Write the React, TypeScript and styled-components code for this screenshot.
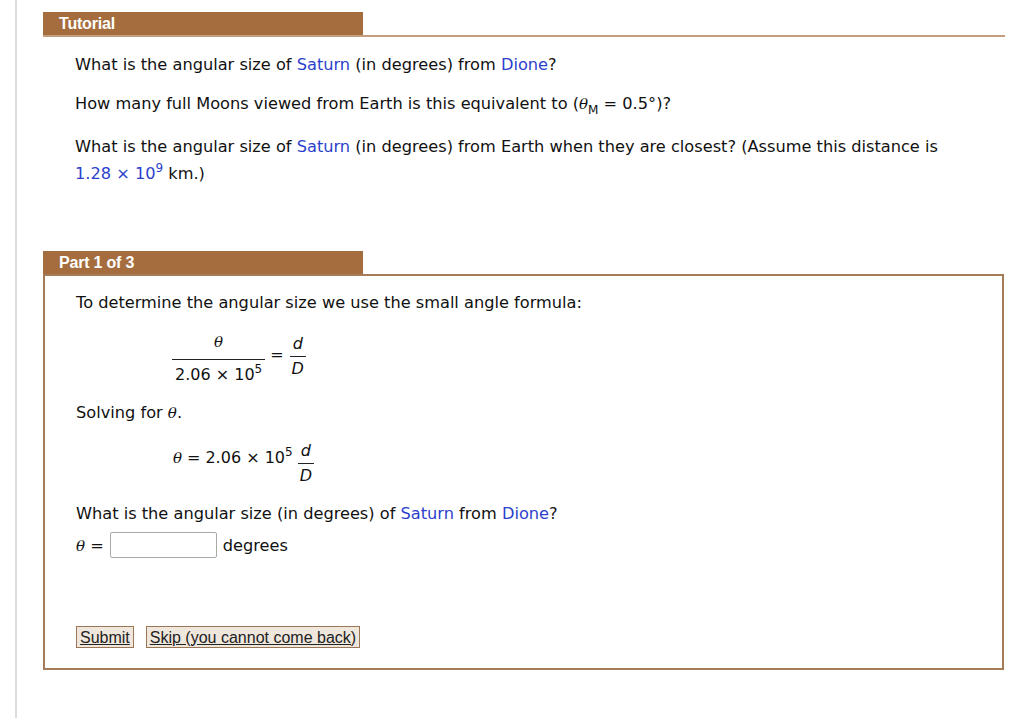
import styled, { createGlobalStyle } from 'styled-components';

const GlobalStyle = createGlobalStyle`
  body {
    margin: 0;
    background: #fff;
    color: #111;
    font-family: "DejaVu Sans", Verdana, sans-serif;
  }
`;

const PageStyled = styled.div`
  display: flex;
  min-height: 718px;
`;

const RailStyled = styled.div`
  margin-left: 15px;
  width: 2px;
  background: #dddddd;
`;

const MainStyled = styled.div`
  margin-left: 26px;
  width: 962px;
  padding-top: 12px;
`;

const HeadStyled = styled.div<{ $boxed?: boolean }>`
  display: flex;
  border-bottom: 2px solid ${(p) => (p.$boxed ? '#a47c58' : '#c29e7e')};
  margin-right: ${(p) => (p.$boxed ? '1px' : '0')};
`;

const TabStyled = styled.div`
  width: 304px;
  height: 23px;
  padding-left: 16px;
  background: #a56d3e;
  color: #fff;
  font-family: "Liberation Sans", Arial, sans-serif;
  font-weight: 700;
  font-size: 16px;
  line-height: 24px;
  letter-spacing: -0.2px;
`;

const TutorialBody = styled.div`
  padding: 14px 0 0 32px;
  height: 200px;
`;

const Para = styled.p<{ $gap?: number; $top?: number }>`
  margin: ${(p) => p.$top ?? 0}px 0 ${(p) => p.$gap ?? 12}px;
  font-size: 16.2px;
  line-height: 27px;
`;

const Blue = styled.span`
  color: #2c3fcc;
`;

const Sub = styled.sub`
  font-size: 12px;
  vertical-align: -5px;
  line-height: 0;
`;

const Sup = styled.sup`
  font-size: 12px;
  vertical-align: 7px;
  line-height: 0;
`;

const Theta = styled.i`
  font-family: "DejaVu Serif", "Liberation Serif", serif;
  font-style: italic;
  font-size: 15px;
`;

const PartBox = styled.div`
  border: 2px solid #a47c58;
  border-top: none;
  height: 394px;
  margin-right: 1px;
  padding: 13px 0 0 31px;
  box-sizing: border-box;
  font-size: 16.2px;
`;

const EquationRow = styled.div<{ $indent: number; $top: number }>`
  display: flex;
  align-items: center;
  margin: ${(p) => p.$top}px 0 0 ${(p) => p.$indent}px;
  font-size: 16px;
`;

const Fraction = styled.span<{ $lead?: number; $drop?: number; $lift?: number }>`
  display: inline-flex;
  flex-direction: column;
  align-items: center;
  margin-left: ${(p) => p.$lead ?? 0}px;
  margin-top: ${(p) => p.$drop ?? 0}px;
  margin-bottom: ${(p) => p.$lift ?? 0}px;
`;

const Numer = styled.span<{ $wide?: boolean }>`
  display: block;
  padding: 0 ${(p) => (p.$wide ? '3px' : '2px')} ${(p) => (p.$wide ? '7px' : '2px')};
  border-bottom: 1px solid #222;
  align-self: stretch;
  text-align: center;
  line-height: 20px;
`;

const Denom = styled.span<{ $wide?: boolean }>`
  display: block;
  padding: ${(p) => (p.$wide ? '5px 3px 0' : '2px 2px 0')};
  line-height: 20px;
`;

const ItalicVar = styled.i`
  font-style: italic;
`;

const Equals = styled.span<{ $left: number; $right: number; $lift?: number }>`
  margin: 0 ${(p) => p.$right}px ${(p) => p.$lift ?? 0}px ${(p) => p.$left}px;
`;

const AnswerRow = styled.div`
  display: flex;
  align-items: center;
  margin-top: 5px;
`;

const AnswerLabel = styled.span`
  margin-right: 6px;
`;

const AnswerInput = styled.input`
  width: 107px;
  height: 26px;
  margin: 0 6px 0 0;
  padding: 0 3px;
  border: 1px solid #a9a9a9;
  border-radius: 2px;
  box-sizing: border-box;
`;

const ButtonRow = styled.div`
  display: flex;
  gap: 12px;
  margin-top: 68px;
`;

const ActionButton = styled.button`
  height: 22px;
  padding: 0 3px;
  background: #efe6dc;
  border: 1px solid #9a7656;
  color: #222;
  font-family: "Liberation Sans", Arial, sans-serif;
  font-size: 16px;
  text-decoration: underline;
  line-height: 19px;
  cursor: pointer;
`;

const App = () => {
  return (
    <PageStyled>
      <GlobalStyle />
      <RailStyled />
      <MainStyled>
        <HeadStyled>
          <TabStyled>Tutorial</TabStyled>
        </HeadStyled>
        <TutorialBody>
          <Para>
            What is the angular size of <Blue>Saturn</Blue> (in degrees) from <Blue>Dione</Blue>?
          </Para>
          <Para $gap={15}>
            How many full Moons viewed from Earth is this equivalent to (<Theta>θ</Theta>
            <Sub>M</Sub> = 0.5°)?
          </Para>
          <Para>
            What is the angular size of <Blue>Saturn</Blue> (in degrees) from Earth when they are
            closest? (Assume this distance is
            <br />
            <Blue>
              1.28 × 10<Sup>9</Sup>
            </Blue>{' '}
            km.)
          </Para>
        </TutorialBody>

        <HeadStyled $boxed>
          <TabStyled>Part 1 of 3</TabStyled>
        </HeadStyled>
        <PartBox>
          <Para>To determine the angular size we use the small angle formula:</Para>
          <EquationRow $indent={96} $top={16}>
            <Fraction>
              <Numer $wide>
                <Theta>θ</Theta>
              </Numer>
              <Denom $wide>
                2.06 × 10<Sup>5</Sup>
              </Denom>
            </Fraction>
            <Equals $left={5} $right={6} $lift={8}>
              =
            </Equals>
            <Fraction $lift={4}>
              <Numer>
                <ItalicVar>d</ItalicVar>
              </Numer>
              <Denom>
                <ItalicVar>D</ItalicVar>
              </Denom>
            </Fraction>
          </EquationRow>
          <Para $top={14} $gap={0}>
            Solving for <Theta>θ</Theta>.
          </Para>
          <EquationRow $indent={97} $top={2}>
            <Theta>θ</Theta>
            <Equals $left={5} $right={5}>
              =
            </Equals>
            <span>
              2.06 × 10<Sup>5</Sup>
            </span>
            <Fraction $lead={5} $drop={12}>
              <Numer>
                <ItalicVar>d</ItalicVar>
              </Numer>
              <Denom>
                <ItalicVar>D</ItalicVar>
              </Denom>
            </Fraction>
          </EquationRow>
          <Para $top={14} $gap={0}>
            What is the angular size (in degrees) of <Blue>Saturn</Blue> from <Blue>Dione</Blue>?
          </Para>
          <AnswerRow>
            <AnswerLabel>
              <Theta>θ</Theta> =
            </AnswerLabel>
            <AnswerInput type="text" />
            <span>degrees</span>
          </AnswerRow>
          <ButtonRow>
            <ActionButton>Submit</ActionButton>
            <ActionButton>Skip (you cannot come back)</ActionButton>
          </ButtonRow>
        </PartBox>
      </MainStyled>
    </PageStyled>
  );
};

export default App;
